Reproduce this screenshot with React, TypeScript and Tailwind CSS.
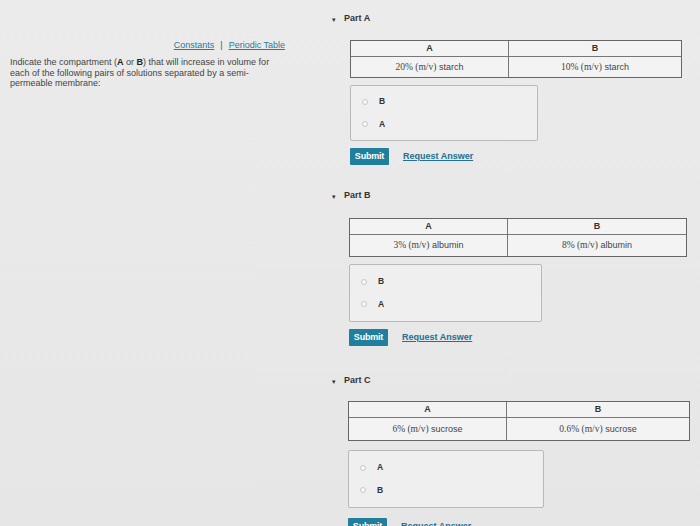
import React from 'react';

type Part = {
  label: string;
  a: [string, string];
  b: [string, string];
  options: string[];
  tableW: string;
  boxW: string;
  pt: string;
  tableMt: string;
  boxMt: string;
  boxH: string;
  btnMt: string;
  indent: string;
  rowH: string;
};

const parts: Part[] = [
  { label: 'Part A', a: ['20% (m/v)', 'starch'], b: ['10% (m/v)', 'starch'], options: ['B', 'A'], tableW: 'w-[332px]', boxW: 'w-[188px]', pt: 'pt-[13px]', tableMt: 'mt-[15px]', boxMt: 'mt-[7px]', boxH: 'h-[56px]', btnMt: 'mt-[7px]', indent: 'pl-[30px]', rowH: 'h-[20px]' },
  { label: 'Part B', a: ['3% (m/v)', 'albumin'], b: ['8% (m/v)', 'albumin'], options: ['B', 'A'], tableW: 'w-[338px]', boxW: 'w-[193px]', pt: 'pt-[25px]', tableMt: 'mt-[16px]', boxMt: 'mt-[7px]', boxH: 'h-[58px]', btnMt: 'mt-[7px]', indent: 'pl-[29px]', rowH: 'h-[21px]' },
  { label: 'Part C', a: ['6% (m/v)', 'sucrose'], b: ['0.6% (m/v)', 'sucrose'], options: ['A', 'B'], tableW: 'w-[342px]', boxW: 'w-[196px]', pt: 'pt-[29px]', tableMt: 'mt-[14px]', boxMt: 'mt-[9px]', boxH: 'h-[58px]', btnMt: 'mt-[10px]', indent: 'pl-[28px]', rowH: 'h-[22px]' },
];

const Cell = ({ v }: { v: [string, string] }) => (
  <span className="text-[9px] text-[#444]">
    <span className="font-['Liberation_Serif',serif] text-[9.5px]">{v[0]}</span> {v[1]}
  </span>
);

const PartBlock = ({ p }: { p: Part }) => (
  <div className={p.pt}>
    {/* header */}
    <div className="flex items-center h-[12px] pl-[12px]">
      <span className="text-[7px] text-[#333] mr-[8px] leading-none">▾</span>
      <span className="text-[9px] font-bold text-[#333]">{p.label}</span>
    </div>

    <div className={p.indent}>
      {/* table */}
      <div className={`${p.tableW} ${p.tableMt} border border-[#666] bg-[#f3f3f3]`}>
        <div className="grid grid-cols-[158px_1fr] h-[16px] border-b border-[#777]">
          <div className="flex items-center justify-center border-r border-[#777] text-[9px] font-bold text-[#333]">A</div>
          <div className="flex items-center justify-center text-[9px] font-bold text-[#333]">B</div>
        </div>
        <div className={`grid grid-cols-[158px_1fr] ${p.rowH}`}>
          <div className="flex items-center justify-center border-r border-[#777]"><Cell v={p.a} /></div>
          <div className="flex items-center justify-center"><Cell v={p.b} /></div>
        </div>
      </div>

      {/* choices */}
      <div className={`${p.boxW} ${p.boxH} ${p.boxMt} border border-[#b9b9b9] rounded-[2px] bg-[#efefef] flex flex-col justify-center gap-[10px] pl-[11px]`}>
        {p.options.map((o) => (
          <div key={o} className="flex items-center">
            <span className="w-[6px] h-[6px] rounded-full border border-[#c8c8c8] bg-[#f7f7f7]" />
            <span className="ml-[11px] text-[8.5px] font-bold text-[#333]">{o}</span>
          </div>
        ))}
      </div>

      {/* actions */}
      <div className={`flex items-center ${p.btnMt}`}>
        <button className="h-[17px] w-[39px] bg-[#1f7f9c] text-white text-[9px] font-bold rounded-[1px] tracking-[-0.2px]">Submit</button>
        <a className="ml-[14px] text-[9px] font-bold text-[#246f93] underline">Request Answer</a>
      </div>
    </div>
  </div>
);

export default function App() {
  return (
    <div className="w-[700px] h-[526px] overflow-hidden flex bg-gradient-to-b from-[#ebebeb] to-[#e6e6e6] font-['Liberation_Sans',Arial,sans-serif]">
      {/* left */}
      <div className="w-[320px] shrink-0 pl-[10px] pr-[35px] pt-[40px]">
        <div className="flex justify-end items-center text-[9px] text-[#2a7aa0] h-[12px]">
          <a className="underline">Constants</a>
          <span className="mx-[6px] text-[#555]">|</span>
          <a className="underline">Periodic Table</a>
        </div>
        <p className="mt-[5px] text-[9px] leading-[10.5px] text-[#444]">
          Indicate the compartment (<b className="text-[#222]">A</b> or <b className="text-[#222]">B</b>) that will increase in volume for
          <br />
          each of the following pairs of solutions separated by a semi-
          <br />
          permeable membrane:
        </p>
      </div>

      {/* right */}
      <div className="flex-1">
        {parts.map((p) => (
          <PartBlock key={p.label} p={p} />
        ))}
      </div>
    </div>
  );
}
